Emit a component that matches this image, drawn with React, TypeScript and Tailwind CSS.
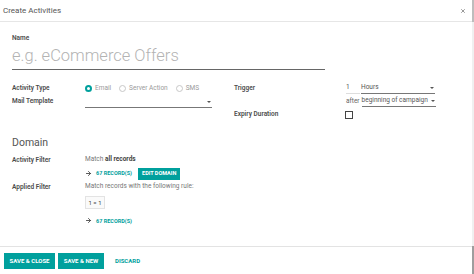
import { ArrowRight, X } from "lucide-react"

// Dialog "Create Activities" — dạng form Odoo

const teal = "bg-[#00a09d]"

function Label({ children }: { children: React.ReactNode }) {
    return <div className="text-[6.5px] font-semibold text-[#4c4c4c]">{children}</div>
}

function Radio({ label, checked }: { label: string; checked?: boolean }) {
    return (
        <div className="flex items-center gap-[3px]">
            <span
                className={
                    checked
                        ? "w-[7px] h-[7px] rounded-full border-[2px] border-[#00a09d] bg-white"
                        : "w-[7px] h-[7px] rounded-full border border-[#c8c8c8] bg-white"
                }
            />
            <span className="text-[6.5px] text-[#9a9a9a]">{label}</span>
        </div>
    )
}

function SelectLine({ value, className }: { value?: string; className?: string }) {
    return (
        <div className={`flex items-center justify-between border-b border-[#777] h-[11px] ${className ?? ""}`}>
            <span className="text-[6.5px] text-[#555]">{value}</span>
            <span className="w-0 h-0 border-l-[2px] border-r-[2px] border-t-[2px] border-l-transparent border-r-transparent border-t-[#555] mr-[1px]" />
        </div>
    )
}

function Records() {
    return (
        <div className="flex items-center gap-[4px]">
            <ArrowRight className="w-[7px] h-[7px] text-[#444]" strokeWidth={3} />
            <span className="text-[5.5px] font-bold text-[#00a09d]">67 RECORD(S)</span>
        </div>
    )
}

export default function App() {
    return (
        <div className="w-[474px] h-[274px] bg-white flex font-['Roboto',sans-serif] overflow-hidden">
            <div className="flex-1 flex flex-col">
                {/* Header */}
                <div className="h-[22px] flex items-center justify-between pl-[3px] pr-[6px] border-b border-[#e6e6e6]">
                    <span className="text-[8px] font-normal text-[#555]">Create Activities</span>
                    <X className="w-[6px] h-[6px] text-[#777]" strokeWidth={3} />
                </div>

                {/* Body */}
                <div className="flex-1 pl-[12px] pt-[12px]">
                    <Label>Name</Label>
                    <div className="w-[313px] border-b border-[#666] h-[26px] flex items-center">
                        <span className="text-[16.5px] font-light text-[#b3b3b3] leading-none">e.g. eCommerce Offers</span>
                    </div>

                    <div className="flex mt-[13px]">
                        {/* Cột trái */}
                        <div className="w-[222px] flex flex-col">
                            <div className="flex items-center h-[12px]">
                                <div className="w-[73px]"><Label>Activity Type</Label></div>
                                <div className="flex items-center gap-[8px]">
                                    <Radio label="Email" checked />
                                    <Radio label="Server Action" />
                                    <Radio label="SMS" />
                                </div>
                            </div>
                            <div className="flex items-center h-[14px]">
                                <div className="w-[73px]"><Label>Mail Template</Label></div>
                                <SelectLine className="w-[127px] mt-[2px]" />
                            </div>
                        </div>

                        {/* Cột phải */}
                        <div className="flex flex-col">
                            <div className="flex items-center h-[12px]">
                                <div className="w-[112px]"><Label>Trigger</Label></div>
                                <div className="flex items-center">
                                    <div className="w-[14px] border-b border-[#ddd] h-[11px] flex items-center">
                                        <span className="text-[6.5px] text-[#555]">1</span>
                                    </div>
                                    <SelectLine value="Hours" className="w-[74px] ml-[1px]" />
                                </div>
                            </div>
                            <div className="flex items-center h-[14px]">
                                <div className="w-[112px]" />
                                <span className="text-[6.5px] text-[#666] mr-[2px]">after</span>
                                <SelectLine value="beginning of campaign" className="w-[74px]" />
                            </div>
                            <div className="flex items-center h-[13px]">
                                <div className="w-[111px]"><Label>Expiry Duration</Label></div>
                                <span className="w-[8px] h-[8px] border border-[#444] bg-white" />
                            </div>
                        </div>
                    </div>

                    {/* Domain */}
                    <div className="mt-[13px] text-[10.5px] text-[#555]">Domain</div>
                    <div className="flex mt-[3px]">
                        <div className="w-[73px] pt-[2px]"><Label>Activity Filter</Label></div>
                        <div className="flex flex-col">
                            <span className="text-[6.5px] text-[#777] h-[12px] flex items-center">
                                Match&nbsp;<b className="text-[#444]">all records</b>
                            </span>
                            <div className="flex items-center gap-[6px] mt-[2px]">
                                <Records />
                                <span className={`${teal} text-white text-[5.5px] font-bold px-[4px] h-[12px] flex items-center`}>EDIT DOMAIN</span>
                            </div>
                        </div>
                    </div>
                    <div className="flex mt-[1px]">
                        <div className="w-[73px] pt-[2px]"><Label>Applied Filter</Label></div>
                        <div className="flex flex-col">
                            <span className="text-[6.5px] text-[#777] h-[12px] flex items-center">Match records with the following rule:</span>
                            <span className="mt-[3px] w-[20px] h-[13px] border border-[#e3e3e3] bg-[#fafafa] flex items-center justify-center text-[6px] text-[#444]">1 = 1</span>
                            <div className="mt-[8px]"><Records /></div>
                        </div>
                    </div>
                </div>

                {/* Footer */}
                <div className="h-[28px] border-t border-[#e3e3e3] flex items-center pl-[4px] gap-[3px] shrink-0">
                    <span className={`${teal} text-white text-[6px] font-bold h-[16px] w-[51px] flex items-center justify-center`}>SAVE &amp; CLOSE</span>
                    <span className={`${teal} text-white text-[6px] font-bold h-[16px] w-[46px] flex items-center justify-center`}>SAVE &amp; NEW</span>
                    <span className="text-[#00a09d] text-[6px] font-bold px-[8px]">DISCARD</span>
                </div>
            </div>

            {/* Thanh cuộn */}
            <div className="w-[2px] flex flex-col">
                <div className="h-[22px] bg-[#bdbdbd]" />
                <div className="flex-1 bg-[#f0f0f0]" />
                <div className="h-[28px] bg-[#9e9e9e]" />
            </div>
        </div>
    )
}
